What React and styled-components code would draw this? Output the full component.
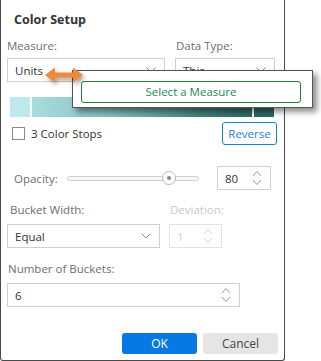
import React from 'react'
import styled, { createGlobalStyle } from 'styled-components'

const Global = createGlobalStyle`
  body {
    margin: 0;
    background: #fff;
    font-family: "Open Sans", "Liberation Sans", sans-serif;
  }
`;

const Page = styled.div`
  position: relative;
  width: 321px;
  height: 361px;
  overflow: hidden;
`;

const Dialog = styled.div`
  width: 285px;
  height: 361px;
  box-sizing: border-box;
  border: 1px solid #4a4a4a;
  border-top: none;
  border-radius: 0 0 3px 3px;
  padding: 0 7px 0 6px;
  display: flex;
  flex-direction: column;
`;

const Title = styled.div`
  margin: 11px 0 0 7px;
  font-size: 12.5px;
  font-weight: 700;
  color: #333;
  line-height: 18px;
`;

const Pair = styled.div`
  display: grid;
  grid-template-columns: ${p => p.cols};
  column-gap: ${p => p.gap || 10}px;
  margin-top: ${p => p.top}px;
`;

const Field = styled.div`
  display: flex;
  flex-direction: column;
`;

const Label = styled.div`
  font-size: 11.5px;
  line-height: 16px;
  color: ${p => (p.disabled ? '#c8c8c8' : '#6e6e6e')};
  padding-left: ${p => p.indent || 0}px;
  margin-bottom: ${p => p.gap || 4}px;
`;

const Box = styled.div`
  height: 24px;
  box-sizing: border-box;
  border: 1px solid ${p => (p.disabled ? '#e2e2e2' : '#cfcfcf')};
  background: #fff;
  display: flex;
  align-items: center;
  justify-content: space-between;
  padding: 0 8px 0 7px;
  font-size: 11.5px;
  color: ${p => (p.disabled ? '#cfcfcf' : '#333')};
  width: ${p => (p.w ? p.w + 'px' : 'auto')};
`;

const Chevron = ({ color = '#8a8a8a' }) => (
  <svg width="10" height="6" viewBox="0 0 10 6">
    <polyline points="0.5,0.5 5,5 9.5,0.5" fill="none" stroke={color} strokeWidth="1" />
  </svg>
);

const Spin = ({ color = '#9a9a9a' }) => (
  <svg width="10" height="16" viewBox="0 0 10 16">
    <polyline points="1,6 5,1.5 9,6" fill="none" stroke={color} strokeWidth="1" />
    <polyline points="1,10 5,14.5 9,10" fill="none" stroke={color} strokeWidth="1" />
  </svg>
);

const Scale = styled.div`
  display: flex;
  gap: 2px;
  height: 20px;
  margin: 15px 3px 0 3px;
`;

const Stop = styled.div`
  width: ${p => (p.w ? p.w + 'px' : 'auto')};
  flex: ${p => (p.w ? '0 0 auto' : '1')};
  background: ${p => p.bg};
`;

const Row = styled.div`
  display: flex;
  align-items: center;
  justify-content: space-between;
  margin-top: ${p => p.top}px;
  padding-left: ${p => p.indent || 0}px;
`;

const Check = styled.label`
  display: flex;
  align-items: center;
  gap: 6px;
  padding-left: 5px;
  font-size: 11.5px;
  color: #333;
`;

const CheckBox = styled.span`
  width: 13px;
  height: 13px;
  box-sizing: border-box;
  border: 1px solid #8a8a8a;
  background: #fff;
`;

const OutlineButton = styled.button`
  height: ${p => p.h || 23}px;
  width: ${p => p.w}px;
  box-sizing: border-box;
  border: 1px solid ${p => p.color};
  border-radius: 3px;
  background: #fff;
  color: ${p => p.text || p.color};
  font-family: inherit;
  font-size: 11.5px;
  padding: 0;
`;

const Inline = styled.div`
  display: flex;
  align-items: center;
  font-size: 11.5px;
  color: #6e6e6e;
`;

const Track = styled.div`
  position: relative;
  width: 132px;
  height: 5px;
  margin-left: 9px;
  box-sizing: border-box;
  border: 1px solid #cfcfcf;
  border-radius: 3px;
  background: #f6f6f6;
`;

const Thumb = styled.div`
  position: absolute;
  left: ${p => p.at}px;
  top: -6px;
  width: 14px;
  height: 14px;
  box-sizing: border-box;
  border: 1px solid #b8b8b8;
  border-radius: 50%;
  background: #fff;
  display: flex;
  align-items: center;
  justify-content: center;
  &::after {
    content: '';
    width: 4px;
    height: 4px;
    border-radius: 50%;
    background: #8a8a8a;
  }
`;

const NumberBox = styled(Box)`
  margin-right: 6px;
`;

const Footer = styled.div`
  display: flex;
  justify-content: flex-end;
  gap: 6px;
  margin-top: auto;
  margin-bottom: 6px;
  margin-right: -1px;
`;

const SolidButton = styled.button`
  width: 75px;
  height: 21px;
  border: none;
  border-radius: 3px;
  background: ${p => (p.primary ? '#0878e4' : '#e5e5e5')};
  color: ${p => (p.primary ? '#fff' : '#444')};
  font-family: inherit;
  font-size: 12px;
  padding: 0;
`;

const Popup = styled.div`
  position: absolute;
  left: 72px;
  top: 70px;
  width: 241px;
  height: 38px;
  box-sizing: border-box;
  border: 1px solid #555;
  background: #fff;
  box-shadow: 4px 4px 6px rgba(0, 0, 0, 0.45);
  padding: 8px 12px 0 8px;
`;

const Arrow = styled.svg`
  position: absolute;
  left: 44px;
  top: 66px;
  filter: drop-shadow(2px 3px 2px rgba(0, 0, 0, 0.35));
`;

export default function App() {
  return (
    <Page>
      <Global />
      <Dialog>
        <Title>Color Setup</Title>
        <Pair cols="158px 100px" top={9}>
          <Field>
            <Label>Measure:</Label>
            <Box>Units<Chevron /></Box>
          </Field>
          <Field>
            <Label indent={1}>Data Type:</Label>
            <Box>This<Chevron /></Box>
          </Field>
        </Pair>
        <Scale>
          <Stop w={20} bg="#bde8ec" />
          <Stop bg="linear-gradient(to right, #a9dcdd, #86c2c2 35%, #3e7f77 80%, #2f6c63)" />
          <Stop w={20} bg="#2d6a61" />
        </Scale>
        <Row top={5}>
          <Check>
            <CheckBox />3 Color Stops
          </Check>
          <OutlineButton w={55} color="#1b7fd8">Reverse</OutlineButton>
        </Row>
        <Row top={21} indent={7}>
          <Inline>
            Opacity:
            <Track><Thumb at={94} /></Track>
          </Inline>
          <NumberBox w={54}>80<Spin /></NumberBox>
        </Row>
        <Pair cols="153px 53px" gap={9} top={12}>
          <Field>
            <Label indent={3} gap={6}>Bucket Width:</Label>
            <Box>Equal<Chevron /></Box>
          </Field>
          <Field>
            <Label indent={1} gap={6} disabled>Deviation:</Label>
            <Box disabled>1<Spin color="#d4d4d4" /></Box>
          </Field>
        </Pair>
        <Pair cols="233px" top={13}>
          <Field>
            <Label indent={1} gap={6}>Number of Buckets:</Label>
            <Box>6<Spin /></Box>
          </Field>
        </Pair>
        <Footer>
          <SolidButton primary>OK</SolidButton>
          <SolidButton>Cancel</SolidButton>
        </Footer>
      </Dialog>
      <Popup>
        <OutlineButton w={220} h={22} color="#23822f" text="#1c8a4e">Select a Measure</OutlineButton>
      </Popup>
      <Arrow width="42" height="18" viewBox="0 0 42 18">
        <path d="M1 9 L11 1.5 L11 6.5 L29 6.5 L29 1.5 L39 9 L29 16.5 L29 11.5 L11 11.5 L11 16.5 Z" fill="#f08a3a" />
      </Arrow>
    </Page>
  )
}
